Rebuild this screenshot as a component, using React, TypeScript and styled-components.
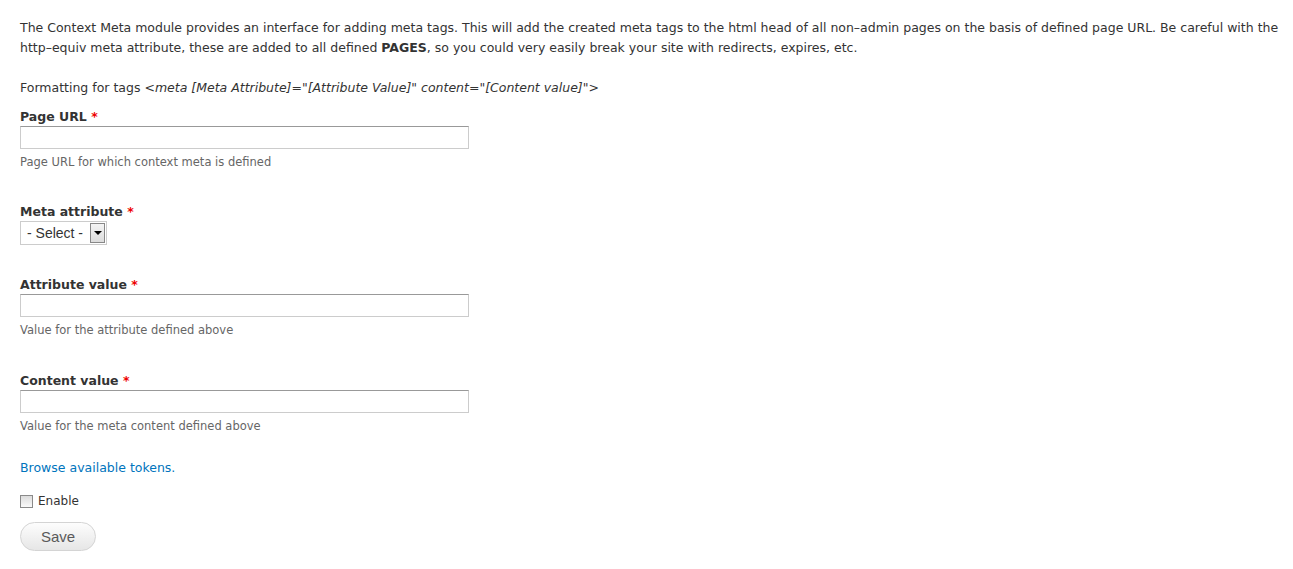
import styled, { createGlobalStyle } from "styled-components";

const GlobalStyle = createGlobalStyle`
  body {
    margin: 0;
    background: #fff;
    color: #333;
    font-family: "DejaVu Sans", Verdana, sans-serif;
    font-size: 13px;
    line-height: 20px;
  }
`;

const Page = styled.div`
  padding: 18px 0 18px 20px;
`;

const Intro = styled.p`
  margin: 0 0 20px;
  font-size: 12.5px;
  line-height: 20px;
  color: #333;
`;

const Format = styled.p`
  margin: 0 0 9px;
  font-size: 12.5px;
  em {
    font-style: italic;
  }
`;

const FormItem = styled.div<{ $gap: number }>`
  margin-bottom: ${(p) => p.$gap}px;
`;

const Label = styled.label`
  display: block;
  font-weight: bold;
  font-size: 12.5px;
  line-height: 19px;
`;

const Required = styled.span`
  color: #e00;
`;

const TextInput = styled.input`
  display: block;
  box-sizing: border-box;
  width: 449px;
  height: 23px;
  margin: 0;
  padding: 2px 4px;
  border: 1px solid #ccc;
  border-top-color: #999;
  background: #fff;
  font-family: inherit;
  font-size: 13px;
`;

const Description = styled.div`
  font-size: 11.5px;
  line-height: 16px;
  color: #666;
  margin-top: 5px;
`;

const SelectBox = styled.div`
  display: flex;
  width: max-content;
  align-items: stretch;
  box-sizing: border-box;
  height: 24px;
  border: 1px solid #ccc;
  background: #fff;
`;

const SelectText = styled.span`
  font-family: "Liberation Sans", Arial, sans-serif;
  font-size: 14px;
  line-height: 22px;
  color: #333;
  padding: 0 7px 0 6px;
`;

const SelectArrow = styled.span`
  width: 15px;
  margin: 1px 1px 1px 0;
  box-sizing: border-box;
  border: 1px solid #888;
  background: linear-gradient(#f4f4f4, #dcdcdc);
  display: flex;
  align-items: center;
  justify-content: center;
`;

const Arrow = styled.span`
  width: 0;
  height: 0;
  border-left: 4px solid transparent;
  border-right: 4px solid transparent;
  border-top: 4px solid #000;
`;

const TokenLink = styled.a`
  display: block;
  color: #0074bd;
  text-decoration: none;
  font-size: 12.5px;
  margin-bottom: 13px;
`;

const CheckRow = styled.label`
  display: flex;
  align-items: center;
  gap: 5px;
  font-size: 12px;
  margin-bottom: 11px;
`;

const CheckBox = styled.span`
  width: 11px;
  height: 11px;
  border: 1px solid #8a8a8a;
  background: linear-gradient(#dcdcdc, #fafafa);
`;

const SaveButton = styled.button`
  box-sizing: border-box;
  width: 76px;
  height: 29px;
  border: 1px solid #d4d4d4;
  border-radius: 15px;
  background: linear-gradient(#fdfdfd, #e6e6e6);
  font-family: "Liberation Sans", Arial, sans-serif;
  font-size: 15px;
  color: #5a5a5a;
  padding: 0;
`;

export default function App() {
  return (
    <Page>
      <GlobalStyle />
      <Intro>
        The Context Meta module provides an interface for adding meta tags. This will add the
        created meta tags to the html head of all non–admin pages on the basis of defined page
        URL. Be careful with the http–equiv meta attribute, these are added to all defined{" "}
        <strong>PAGES</strong>, so you could very easily break your site with redirects, expires,
        etc.
      </Intro>
      <Format>
        Formatting for tags{" "}
        <em>
          &lt;meta [Meta Attribute]="[Attribute Value]" content="[Content value]"&gt;
        </em>
      </Format>

      <FormItem $gap={32}>
        <Label>
          Page URL <Required>*</Required>
        </Label>
        <TextInput type="text" />
        <Description>Page URL for which context meta is defined</Description>
      </FormItem>

      <FormItem $gap={30}>
        <Label>
          Meta attribute <Required>*</Required>
        </Label>
        <SelectBox>
          <SelectText>- Select -</SelectText>
          <SelectArrow>
            <Arrow />
          </SelectArrow>
        </SelectBox>
      </FormItem>

      <FormItem $gap={33}>
        <Label>
          Attribute value <Required>*</Required>
        </Label>
        <TextInput type="text" />
        <Description>Value for the attribute defined above</Description>
      </FormItem>

      <FormItem $gap={24}>
        <Label>
          Content value <Required>*</Required>
        </Label>
        <TextInput type="text" />
        <Description>Value for the meta content defined above</Description>
      </FormItem>

      <TokenLink href="#">Browse available tokens.</TokenLink>

      <CheckRow>
        <CheckBox />
        Enable
      </CheckRow>

      <SaveButton>Save</SaveButton>
    </Page>
  );
}
